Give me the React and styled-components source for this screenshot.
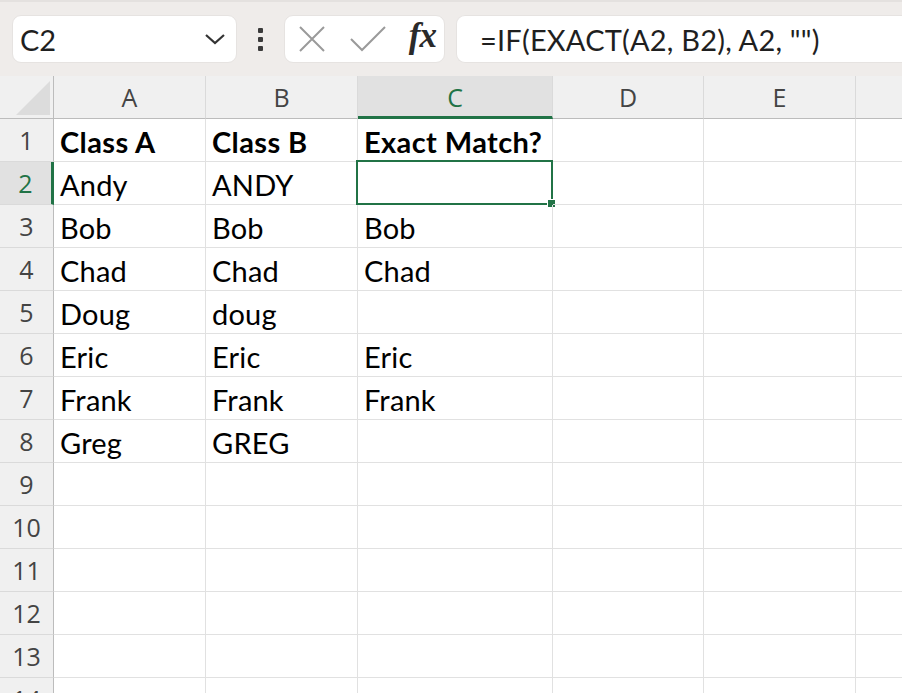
import React from "react";
import styled, { createGlobalStyle } from "styled-components";

const GlobalStyle = createGlobalStyle`
  html, body {
    margin: 0;
    padding: 0;
    background: #ffffff;
    overflow: hidden;
  }
`;

const GREEN = "#217346";

const columns = [
  { name: "A", width: 152 },
  { name: "B", width: 152 },
  { name: "C", width: 195 },
  { name: "D", width: 151 },
  { name: "E", width: 152 },
  { name: "", width: 60 },
];

const rows = [
  ["Class A", "Class B", "Exact Match?"],
  ["Andy", "ANDY", ""],
  ["Bob", "Bob", "Bob"],
  ["Chad", "Chad", "Chad"],
  ["Doug", "doug", ""],
  ["Eric", "Eric", "Eric"],
  ["Frank", "Frank", "Frank"],
  ["Greg", "GREG", ""],
  [], [], [], [], [], [],
];

const Page = styled.div`
  width: 902px;
  height: 693px;
  overflow: hidden;
  display: flex;
  flex-direction: column;
  font-family: "Open Sans", "Noto Sans", sans-serif;
`;

const Toolbar = styled.div`
  height: 76px;
  flex: none;
  background: #efecea;
  border-top: 2px solid #e4e1df;
  box-sizing: border-box;
  display: flex;
  align-items: center;
  padding-left: 12px;
`;

const Pill = styled.div`
  height: 48px;
  background: #ffffff;
  border-radius: 9px;
  box-sizing: border-box;
  border: 1px solid #e6e3e1;
  display: flex;
  align-items: center;
`;

const NameBox = styled(Pill)`
  width: 225px;
  padding: 0 10px 0 7px;
  justify-content: space-between;
  font-family: "Lato", "Open Sans", sans-serif;
  font-size: 29px;
  color: #1f1f1f;
`;

const Dots = styled.div`
  width: 47px;
  display: flex;
  flex-direction: column;
  align-items: center;
  gap: 4px;
  span {
    width: 5px;
    height: 5px;
    border-radius: 1px;
    background: #3a3a3a;
  }
`;

const IconBox = styled(Pill)`
  width: 161px;
  padding: 0 8px 0 12px;
  justify-content: space-between;
`;

const Fx = styled.span`
  font-family: "Liberation Serif", "DejaVu Serif", serif;
  font-style: italic;
  font-weight: 700;
  font-size: 35px;
  color: #2a2a2a;
  letter-spacing: -1px;
  margin-top: -6px;
`;

const FormulaBox = styled(Pill)`
  flex: 1;
  margin-left: 11px;
  border-radius: 9px 0 0 9px;
  border-right: none;
  padding-left: 23px;
  font-family: "Lato", "Open Sans", sans-serif;
  font-size: 29px;
  letter-spacing: 0.2px;
  color: #1f1f1f;
`;

const Sheet = styled.div`
  display: grid;
  grid-template-columns: 54px ${columns.map((c) => c.width + "px").join(" ")};
  grid-auto-rows: 43px;
  grid-template-rows: 43px;
`;

const Corner = styled.div`
  background: #f0f0f0;
  border-right: 1px solid #bcbcbc;
  border-bottom: 1px solid #bcbcbc;
  box-sizing: border-box;
  position: relative;
  &::after {
    content: "";
    position: absolute;
    right: 3px;
    bottom: 3px;
    border-style: solid;
    border-width: 0 0 34px 34px;
    border-color: transparent transparent #dcdcdc transparent;
  }
`;

const ColHead = styled.div`
  background: ${(p) => (p.$active ? "#e1e1e1" : "#f0f0f0")};
  border-right: 1px solid #dadada;
  border-bottom: ${(p) => (p.$active ? `3px solid ${GREEN}` : "1px solid #bcbcbc")};
  box-sizing: border-box;
  display: flex;
  align-items: center;
  justify-content: center;
  font-size: 25px;
  color: ${(p) => (p.$active ? GREEN : "#444")};
  padding-top: ${(p) => (p.$active ? "2px" : "0")};
`;

const RowHead = styled.div`
  background: ${(p) => (p.$active ? "#e1e1e1" : "#f0f0f0")};
  border-right: ${(p) => (p.$active ? `3px solid ${GREEN}` : "1px solid #bcbcbc")};
  border-bottom: 1px solid #dadada;
  box-sizing: border-box;
  display: flex;
  align-items: center;
  justify-content: center;
  font-size: 25px;
  color: ${(p) => (p.$active ? GREEN : "#444")};
`;

const Cell = styled.div`
  border-right: 1px solid #e1e1e1;
  border-bottom: 1px solid #e1e1e1;
  box-sizing: border-box;
  display: flex;
  align-items: flex-end;
  padding: 0 0 5px 6px;
  font-family: "Lato", "Open Sans", sans-serif;
  font-size: 29px;
  line-height: 1;
  letter-spacing: ${(p) => (p.$bold ? "0.4px" : "0.2px")};
  font-weight: ${(p) => (p.$bold ? 700 : 400)};
  color: #000;
  white-space: nowrap;
  position: relative;
`;

const Selection = styled.div`
  position: absolute;
  left: -2px;
  top: -2px;
  right: -1px;
  bottom: -1px;
  border: 2px solid ${GREEN};
  &::after {
    content: "";
    position: absolute;
    right: -5px;
    bottom: -5px;
    width: 7px;
    height: 7px;
    background: ${GREEN};
    border: 1px solid #fff;
  }
`;

function Chevron() {
  return (
    <svg width="22" height="14" viewBox="0 0 22 14">
      <path d="M2 3 L11 11 L20 3" fill="none" stroke="#333" strokeWidth="2.2" />
    </svg>
  );
}

function Cross() {
  return (
    <svg width="30" height="30" viewBox="0 0 30 30">
      <path d="M3 3 L27 27 M27 3 L3 27" stroke="#9a9a9a" strokeWidth="2" />
    </svg>
  );
}

function Check() {
  return (
    <svg width="38" height="28" viewBox="0 0 38 28">
      <path d="M2 14 L13 25 L36 2" fill="none" stroke="#9a9a9a" strokeWidth="2" />
    </svg>
  );
}

export default function App() {
  return (
    <Page>
      <GlobalStyle />
      <Toolbar>
        <NameBox>
          <span>C2</span>
          <Chevron />
        </NameBox>
        <Dots>
          <span />
          <span />
          <span />
        </Dots>
        <IconBox>
          <Cross />
          <Check />
          <Fx>fx</Fx>
        </IconBox>
        <FormulaBox>=IF(EXACT(A2, B2), A2, "")</FormulaBox>
      </Toolbar>
      <Sheet>
        <Corner />
        {columns.map((c) => (
          <ColHead key={c.name || "F"} $active={c.name === "C"}>
            {c.name}
          </ColHead>
        ))}
        {rows.map((r, i) => (
          <React.Fragment key={i}>
            <RowHead $active={i === 1}>{i + 1}</RowHead>
            {columns.map((c, j) => (
              <Cell key={j} $bold={i === 0}>
                {r[j] || ""}
                {i === 1 && j === 2 && <Selection />}
              </Cell>
            ))}
          </React.Fragment>
        ))}
      </Sheet>
    </Page>
  );
}
